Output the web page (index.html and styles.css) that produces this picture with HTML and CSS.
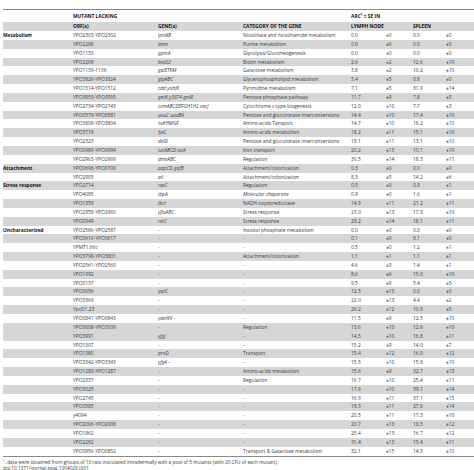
FILE: index.html
```html
<!DOCTYPE html>
<html>
<head>
<meta charset="utf-8">
<link rel="stylesheet" href="styles.css">
</head>
<body>
<div class="page">
<table class="tbl">
<colgroup>
<col class="c0"><col class="c1"><col class="c2"><col class="c3"><col class="c4"><col class="c5"><col class="c6"><col class="c7">
</colgroup>
<thead>
<tr class="h1"><th></th><th colspan="3">MUTANT LACKING</th><th colspan="4">ARC<sup>1</sup> ± SE IN</th></tr>
<tr class="h2"><th></th><th>ORF(s)</th><th>GENE(s)</th><th>CATEGORY OF THE GENE</th><th colspan="2">LYMPH NODE</th><th colspan="2">SPLEEN</th></tr>
</thead>
<tbody>
<tr><td class="grp">Metabolism</td><td>YPO2303-YPO2302</td><td><i>pntAB</i></td><td>Nicotinate and nicotinamide metabolism</td><td>0.0</td><td>±0</td><td>0.0</td><td>±0</td></tr>
<tr class="g"><td></td><td>YPO2288</td><td><i>amn</i></td><td>Purine metabolism</td><td>0.0</td><td>±0</td><td>0.0</td><td>±0</td></tr>
<tr><td></td><td>YPO1133</td><td><i>gpmA</i></td><td>Glycolysis/Gluconeogenesis</td><td>0.0</td><td>±0</td><td>0.0</td><td>±0</td></tr>
<tr class="g"><td></td><td>YPO2269</td><td><i>bioD2</i></td><td>Biotin metabolism</td><td>2.6</td><td>±2</td><td>12.6</td><td>±10</td></tr>
<tr><td></td><td>YPO1139-1136</td><td><i>galETKM</i></td><td>Galactose metabolism</td><td>3.8</td><td>±2</td><td>10.2</td><td>±10</td></tr>
<tr class="g"><td></td><td>YPO3826-YPO3824</td><td><i>glpABC</i></td><td>Glycerophospholipid metabolism</td><td>5.4</td><td>±5</td><td>0.8</td><td>±0</td></tr>
<tr><td></td><td>YPO1514-YPO1512</td><td><i>cdd yohJK</i></td><td>Pyrimidine metabolism</td><td>7.1</td><td>±5</td><td>31.9</td><td>±14</td></tr>
<tr class="g"><td></td><td>YPO3953-YPO3955</td><td><i>gntK y3874 gntR</i></td><td>Pentose phosphate pathway</td><td>11.7</td><td>±9</td><td>7.8</td><td>±5</td></tr>
<tr><td></td><td>YPO2734-YPO2743</td><td><i>ccmABCDEFGH1H2 vacJ</i></td><td>Cytochrome <i>c</i>-type biogenesis</td><td>12.0</td><td>±10</td><td>7.7</td><td>±3</td></tr>
<tr class="g"><td></td><td>YPO0579-YPO0581</td><td><i>uxuC uxuBA</i></td><td>Pentose and glucuronate interconversions</td><td>14.4</td><td>±10</td><td>17.4</td><td>±10</td></tr>
<tr><td></td><td>YPO3808-YPO3804</td><td><i>livKHMGF</i></td><td>Amino-acids Tansport</td><td>14.7</td><td>±10</td><td>16.2</td><td>±10</td></tr>
<tr class="g"><td></td><td>YPO3719</td><td><i>lysC</i></td><td>Amino-acids metabolism</td><td>18.2</td><td>±11</td><td>15.1</td><td>±10</td></tr>
<tr><td></td><td>YPO2323</td><td><i>dolD</i></td><td>Pentose and glucuronate interconversions</td><td>19.1</td><td>±11</td><td>13.1</td><td>±10</td></tr>
<tr class="g"><td></td><td>YPO0989-YPO0994</td><td><i>iucABCD iutA</i></td><td>Iron transport</td><td>20.2</td><td>±13</td><td>10.1</td><td>±10</td></tr>
<tr><td></td><td>YPO2963-YPO2969</td><td><i>dmsABC</i></td><td>Regulation</td><td>30.5</td><td>±14</td><td>18.3</td><td>±11</td></tr>
<tr class="g"><td class="grp">Attachment</td><td>YPO0698-YPO0700</td><td><i>papCD gofB</i></td><td>Attachment/colonization</td><td>0.3</td><td>±0</td><td>0.0</td><td>±0</td></tr>
<tr><td></td><td>YPO2905</td><td><i>ail</i></td><td>Attachment/colonization</td><td>8.3</td><td>±5</td><td>14.2</td><td>±6</td></tr>
<tr class="g"><td class="grp">Stress response</td><td>YPO2714</td><td><i>rseC</i></td><td>Regulation</td><td>0.5</td><td>±0</td><td>0.9</td><td>±1</td></tr>
<tr><td></td><td>YPO4085</td><td><i>ibpA</i></td><td><i>Molecular chaperone</i></td><td>0.9</td><td>±0</td><td>1.6</td><td>±1</td></tr>
<tr class="g"><td></td><td>YPO1359</td><td><i>fkcr</i></td><td>NADH-oxydoreductase</td><td>14.9</td><td>±11</td><td>21.2</td><td>±11</td></tr>
<tr><td></td><td>YPO2958-YPO2960</td><td><i>yfiuABC</i></td><td>Stress response</td><td>23.0</td><td>±13</td><td>17.9</td><td>±10</td></tr>
<tr class="g"><td></td><td>YPO0949</td><td><i>rstC</i></td><td>Stress response</td><td>29.2</td><td>±14</td><td>18.1</td><td>±11</td></tr>
<tr><td class="grp">Uncharacterized</td><td>YPO2586-YPO2587</td><td>-</td><td>Inositol phosphate metabolism</td><td>0.0</td><td>±0</td><td>0.0</td><td>±0</td></tr>
<tr class="g"><td></td><td>YPO0616-YPO0617</td><td>-</td><td>-</td><td>0.1</td><td>±0</td><td>0.1</td><td>±0</td></tr>
<tr><td></td><td>YPMT1.66c</td><td>-</td><td>-</td><td>0.5</td><td>±0</td><td>1.2</td><td>±1</td></tr>
<tr class="g"><td></td><td>YPO3798-YPO3801</td><td>-</td><td>Attachment/colonization</td><td>1.1</td><td>±1</td><td>1.1</td><td>±1</td></tr>
<tr><td></td><td>YPO2561-YPO2560</td><td>-</td><td>-</td><td>4.6</td><td>±3</td><td>1.4</td><td>±1</td></tr>
<tr class="g"><td></td><td>YPO1992</td><td>-</td><td>-</td><td>8.6</td><td>±6</td><td>15.0</td><td>±10</td></tr>
<tr><td></td><td>YPO0137</td><td>-</td><td>-</td><td>9.5</td><td>±9</td><td>5.4</td><td>±5</td></tr>
<tr class="g"><td></td><td>YPO0656</td><td><i>pqiC</i></td><td>-</td><td>12.5</td><td>±13</td><td>0.0</td><td>±0</td></tr>
<tr><td></td><td>YPO3369</td><td>-</td><td>-</td><td>22.0</td><td>±13</td><td>4.4</td><td>±2</td></tr>
<tr class="g"><td></td><td>YpcD1.23</td><td>-</td><td>-</td><td>26.2</td><td>±12</td><td>10.9</td><td>±5</td></tr>
<tr><td></td><td>YPO0841-YPO0843</td><td><i>ydeWV</i> -</td><td>-</td><td>11.5</td><td>±9</td><td>12.5</td><td>±10</td></tr>
<tr class="g"><td></td><td>YPO3008-YPO3009</td><td>-</td><td>Regulation</td><td>13.6</td><td>±10</td><td>12.6</td><td>±10</td></tr>
<tr class="g"><td></td><td>YPO3991</td><td><i>yfgJ</i></td><td>-</td><td>14.5</td><td>±10</td><td>16.8</td><td>±11</td></tr>
<tr><td></td><td>YPO1307</td><td>-</td><td>-</td><td>15.2</td><td>±9</td><td>14.0</td><td>±7</td></tr>
<tr class="g"><td></td><td>YPO1380</td><td><i>proD</i></td><td>Transport</td><td>15.4</td><td>±12</td><td>16.0</td><td>±12</td></tr>
<tr><td></td><td>YPO3342-YPO3343</td><td><i>yfgA</i> -</td><td>-</td><td>15.5</td><td>±10</td><td>15.9</td><td>±10</td></tr>
<tr class="g"><td></td><td>YPO1289-YPO1287</td><td>-</td><td>Amino-acids metabolism</td><td>15.6</td><td>±9</td><td>32.7</td><td>±13</td></tr>
<tr><td></td><td>YPO2337</td><td>-</td><td>Regulation</td><td>16.7</td><td>±10</td><td>25.4</td><td>±11</td></tr>
<tr class="g"><td></td><td>YPO3025</td><td>-</td><td>-</td><td>17.8</td><td>±10</td><td>39.1</td><td>±14</td></tr>
<tr><td></td><td>YPO2745</td><td>-</td><td>-</td><td>16.9</td><td>±11</td><td>37.1</td><td>±15</td></tr>
<tr class="g"><td></td><td>YPO0585</td><td>-</td><td>-</td><td>19.3</td><td>±11</td><td>27.6</td><td>±14</td></tr>
<tr><td></td><td>y4094</td><td>-</td><td>-</td><td>20.5</td><td>±11</td><td>17.3</td><td>±10</td></tr>
<tr class="g"><td></td><td>YPO2006-YPO2008</td><td>-</td><td>-</td><td>20.7</td><td>±13</td><td>18.5</td><td>±12</td></tr>
<tr><td></td><td>YPO1862</td><td>-</td><td>-</td><td>25.4</td><td>±13</td><td>16.7</td><td>±12</td></tr>
<tr class="g"><td></td><td>YPO2282</td><td>-</td><td>-</td><td>31.4</td><td>±13</td><td>15.4</td><td>±11</td></tr>
<tr><td></td><td>YPO0856-YPO0852</td><td>-</td><td>Transport &amp; Galactose metabolism</td><td>32.1</td><td>±15</td><td>14.3</td><td>±10</td></tr>
</tbody>
</table>
<div class="foot">
<p><sup>1</sup>, data were obtained from groups of 10 rats inoculated intradermally with a pool of 5 mutants (with 20 CFU of each mutant).</p>
<p>doi:10.1371/journal.ppat.1004029.t001</p>
</div>
</div>
</body>
</html>
```
FILE: styles.css
```css
html, body {
  margin: 0;
  padding: 0;
  background: #fff;
}
.page {
  padding: 9px 0 0 3px;
  font-family: "Open Sans", "Liberation Sans", sans-serif;
  color: #3a3a3a;
}
.tbl {
  border-collapse: collapse;
  table-layout: fixed;
  width: 471px;
  font-size: 4.9px;
  border-top: 1px solid #8a8a8a;
  border-bottom: 1px solid #8a8a8a;
}
.c0 { width: 70px; }
.c1 { width: 85px; }
.c2 { width: 85px; }
.c3 { width: 108px; }
.c4 { width: 35px; }
.c5 { width: 27px; }
.c6 { width: 33px; }
.c7 { width: 28px; }
.tbl th, .tbl td {
  padding: 0;
  text-align: left;
  white-space: nowrap;
  overflow: hidden;
  vertical-align: middle;
}
.tbl th {
  font-weight: 700;
  color: #111;
}
.h1 th {
  height: 12px;
  line-height: 12px;
}
.h2 th {
  height: 9px;
  line-height: 9px;
  background: #d6d6d6;
}
.tbl sup {
  font-size: 3px;
  vertical-align: 2px;
  line-height: 0;
}
.tbl td {
  height: 8.85px;
  line-height: 8.85px;
}
.tbl tr.g td {
  background: #d6d6d6;
}
.tbl td.grp {
  font-weight: 700;
  color: #111;
}
.foot {
  padding-top: 3.5px;
  font-size: 4.75px;
  line-height: 5.5px;
  color: #3a3a3a;
}
.foot p {
  margin: 0;
}
.foot sup {
  font-size: 3px;
  vertical-align: 1.5px;
  line-height: 0;
}
```
